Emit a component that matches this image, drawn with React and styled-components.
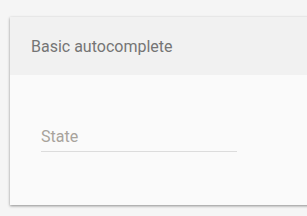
import React from 'react';
import styled, { createGlobalStyle } from 'styled-components';

const GlobalStyle = createGlobalStyle`
    body {
        margin: 0;
        background: #f5f5f5;
        font-family: Roboto, "Liberation Sans", sans-serif;
    }
`;

const Page = styled('div')`
    width: 307px;
    height: 216px;
    overflow: hidden;
    padding: 17px 0 0 10px;
    box-sizing: border-box;
`;

const Card = styled('div')`
    width: 320px;
    background: #fafafa;
    box-shadow: 0 1px 3px rgba(0, 0, 0, 0.25), 0 1px 2px rgba(0, 0, 0, 0.2);
`;

const CardHeader = styled('div')`
    height: 58px;
    display: flex;
    align-items: center;
    padding-left: 21px;
    background: #f1f1f1;
    color: #757575;
    font-size: 16px;
`;

const CardBody = styled('div')`
    height: 130px;
    padding: 52px 0 0 31px;
    box-sizing: border-box;
`;

const Field = styled('label')`
    display: block;
    width: 196px;
    border-bottom: 1px solid #dcdcdc;
    padding-bottom: 4px;
    color: #a8a39c;
    font-size: 16px;
    line-height: 20px;
`;

export default function App() {
	return (
		<Page>
			<GlobalStyle />
			<Card>
				<CardHeader>Basic autocomplete</CardHeader>
				<CardBody>
					<Field>State</Field>
				</CardBody>
			</Card>
		</Page>
	);
}
